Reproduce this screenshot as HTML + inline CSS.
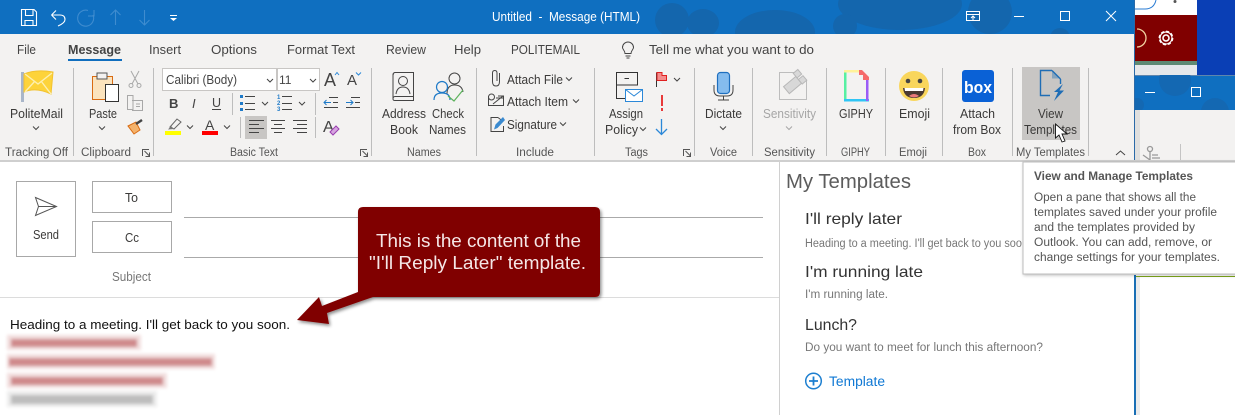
<!DOCTYPE html>
<html><head><meta charset="utf-8"><title>Untitled - Message (HTML)</title>
<style>
html,body{margin:0;padding:0;width:1235px;height:415px;overflow:hidden;background:#fff}
svg{display:block}
text{font-family:"Liberation Sans",sans-serif;font-size:12px;fill:#444}
.t{font-size:12.5px;fill:#444}
.b{font-size:12.5px;fill:#3b3a39}
.g{font-size:11.5px;fill:#555}
.tip{font-size:11.5px;fill:#555}
.ln{fill:none;stroke:#444;stroke-width:1}
.chev{fill:none;stroke:#444;stroke-width:1}
</style></head><body>
<svg width="1235" height="415" viewBox="0 0 1235 415" xmlns="http://www.w3.org/2000/svg">
<defs>
<filter id="bl" x="-10%" y="-10%" width="120%" height="120%"><feGaussianBlur stdDeviation="1.7"/></filter>
<filter id="sh" x="-10%" y="-10%" width="125%" height="130%"><feDropShadow dx="1.5" dy="2" stdDeviation="1.6" flood-color="#000" flood-opacity=".45"/></filter>
<filter id="sh2" x="-5%" y="-5%" width="110%" height="115%"><feDropShadow dx="1" dy="1" stdDeviation="1.5" flood-color="#000" flood-opacity=".25"/></filter>
<path id="c" d="M-3 -1.5 L0 1.5 L3 -1.5" class="chev"/>
<clipPath id="tb"><rect x="0" y="0" width="1134" height="34"/></clipPath>
<clipPath id="bd"><rect x="1135" y="75" width="100" height="35"/></clipPath>
</defs>

<!-- background windows at right -->
<rect x="1135" y="0" width="62" height="15" fill="#fff"/>
<path d="M1135 9 H1145 Q1154 9 1156 0" fill="none" stroke="#2b7cd3" stroke-width="1"/>
<circle cx="1175" cy="1.5" r="1.5" fill="#555"/>
<rect x="1135" y="15" width="62" height="46" fill="#800000"/>
<rect x="1135" y="61" width="62" height="4" fill="#5f8a74"/>
<rect x="1135" y="65" width="62" height="10" fill="#e6e8ea"/>
<rect x="1197" y="0" width="38" height="75" fill="#0a3fb5"/>
<path d="M1137 29 A9 9 0 0 1 1137 47" fill="none" stroke="#f0d0a0" stroke-width="1.3"/>
<g transform="translate(1166,38)" fill="none" stroke="#fff" stroke-width="2">
<circle r="3" stroke-width="1.6"/>
<circle r="6.4" stroke-dasharray="3 2"/>
<circle r="6" stroke-width="1.2"/>
</g>
<rect x="1135" y="75" width="100" height="35" fill="#0f6fc0"/>
<rect x="1135" y="75" width="100" height="1" fill="#5f86ad"/>
<g clip-path="url(#bd)" fill="#1468b2"><circle cx="1175" cy="80" r="16"/><circle cx="1215" cy="112" r="14"/><circle cx="1137" cy="105" r="7"/></g>
<rect x="1145" y="92" width="10" height="1" fill="#fff"/>
<rect x="1191.500" y="87.500" width="9" height="9" fill="none" stroke="#fff"/>
<rect x="1135" y="110" width="100" height="51" fill="#f3f2f1"/>
<rect x="1180" y="144" width="1" height="17" fill="#c4c4c4"/>
<g fill="none" stroke="#999" stroke-width="1.3"><circle cx="1150" cy="149" r="2.500"/><path d="M1150 152 V160 M1143 155 L1150 160 M1152 158 H1160 M1152 155 H1158"/></g>
<rect x="1135" y="161" width="100" height="254" fill="#fff"/>
<rect x="1135" y="276" width="100" height="1" fill="#7ca51a"/>
<rect x="1135" y="110" width="5" height="51" fill="#ccc" opacity=".5"/>
<rect x="1136" y="277" width="4" height="138" fill="#ddd" opacity=".6"/>

<!-- title bar -->
<rect x="0" y="0" width="1134" height="34" fill="#0f6fc0"/>
<g clip-path="url(#tb)" fill="#1466ad">
<circle cx="672" cy="20" r="17"/><ellipse cx="703" cy="23" rx="16" ry="14"/><ellipse cx="775" cy="32" rx="40" ry="22"/>
<ellipse cx="900" cy="4" rx="62" ry="26"/><circle cx="845" cy="26" r="12"/><circle cx="990" cy="12" r="22"/><circle cx="1060" cy="38" r="10"/>
</g>
<text x="492" y="21" textLength="148" lengthAdjust="spacingAndGlyphs" style="font-size:12.500px;fill:#fff">Untitled&#160; -&#160; Message (HTML)</text>
<!-- QAT -->
<g fill="none" stroke="#fff" stroke-width="1.100">
<path d="M21.500 9.500 H34 L36.500 12 V25.500 H21.500 Z M25.500 9.500 V15.500 H33 V9.500 M25 25.500 V20.500 H33 V25.500"/>
<path d="M52 15 H60 Q65 15 65 19.500 Q65 23 58 26 M51.500 15 L56 10.500 M51.500 15 L56 19.500"/>
</g>
<g fill="none" stroke="#3f8ccf" stroke-width="1.100">
<path d="M93 15 A8 8 0 1 1 88 10.500 M94 10 V16 H88"/>
<path d="M115.500 25 V10 M110.500 15 L115.500 10 L120.500 15"/>
<path d="M144.500 10 V25 M139.500 20 L144.500 25 L149.500 20"/>
</g>
<rect x="170" y="15" width="7" height="1" fill="#fff"/><path d="M170 18 H177 L173.500 21 Z" fill="#fff"/>
<!-- window ctrls -->
<g fill="none" stroke="#fff" stroke-width="1">
<path d="M966.500 11.500 H979.500 V20.500 H966.500 Z M966.500 14.500 H979.500 M973 20 V16 M971 18 L973 16 L975 18"/>
<path d="M1014 16.500 H1024"/>
<rect x="1060.500" y="11.500" width="9" height="9"/>
<path d="M1106 11 L1116 21 M1116 11 L1106 21"/>
</g>

<!-- ribbon -->
<rect x="0" y="34" width="1135" height="127" fill="#f3f2f1"/>
<rect x="1134" y="0" width="1" height="161" fill="#2a6aa8"/>
<rect x="0" y="160" width="1235" height="2" fill="#cfcfcf"/>
<text class="t" x="17" y="54" textLength="19" lengthAdjust="spacingAndGlyphs">File</text>
<text class="t" x="68" y="54" textLength="53" lengthAdjust="spacingAndGlyphs" style="font-weight:bold">Message</text>
<rect x="68" y="59" width="54" height="2" fill="#106ebe"/>
<text class="t" x="149" y="54" textLength="32" lengthAdjust="spacingAndGlyphs">Insert</text>
<text class="t" x="211" y="54" textLength="46" lengthAdjust="spacingAndGlyphs">Options</text>
<text class="t" x="287" y="54" textLength="68" lengthAdjust="spacingAndGlyphs">Format Text</text>
<text class="t" x="386" y="54" textLength="40" lengthAdjust="spacingAndGlyphs">Review</text>
<text class="t" x="454" y="54" textLength="27" lengthAdjust="spacingAndGlyphs">Help</text>
<text class="t" x="511" y="54" textLength="69" lengthAdjust="spacingAndGlyphs">POLITEMAIL</text>
<text class="t" x="649" y="54" textLength="165" lengthAdjust="spacingAndGlyphs">Tell me what you want to do</text>
<g fill="none" stroke="#444" transform="translate(0,1.500)"><path d="M625 52 C625 49 622.500 48 622.500 46 A5.500 5.500 0 0 1 633.500 46 C633.500 48 631 49 631 52 Z M625.500 54.500 H630.500 M626.500 56.500 H629.500"/></g>

<!-- separators -->
<g fill="#bdbdbd">
<rect x="73" y="68" width="1" height="88"/><rect x="153" y="68" width="1" height="88"/><rect x="371" y="68" width="1" height="88"/>
<rect x="476" y="68" width="1" height="88"/><rect x="594" y="68" width="1" height="88"/><rect x="694" y="68" width="1" height="88"/>
<rect x="752" y="68" width="1" height="88"/><rect x="826" y="68" width="1" height="88"/><rect x="885" y="68" width="1" height="88"/>
<rect x="942" y="68" width="1" height="88"/><rect x="1012" y="68" width="1" height="88"/><rect x="1088" y="68" width="1" height="88"/>
<rect x="232" y="93" width="1" height="22"/><rect x="315" y="93" width="1" height="22"/><rect x="240" y="117" width="1" height="21"/><rect x="315" y="117" width="1" height="21"/>
</g>

<!-- group labels -->
<text class="g" x="5" y="156" textLength="63" lengthAdjust="spacingAndGlyphs">Tracking Off</text>
<text class="g" x="81" y="156" textLength="50" lengthAdjust="spacingAndGlyphs">Clipboard</text>
<text class="g" x="230" y="156" textLength="48" lengthAdjust="spacingAndGlyphs">Basic Text</text>
<text class="g" x="407" y="156" textLength="34" lengthAdjust="spacingAndGlyphs">Names</text>
<text class="g" x="516" y="156" textLength="38" lengthAdjust="spacingAndGlyphs">Include</text>
<text class="g" x="625" y="156" textLength="23" lengthAdjust="spacingAndGlyphs">Tags</text>
<text class="g" x="710" y="156" textLength="27" lengthAdjust="spacingAndGlyphs">Voice</text>
<text class="g" x="764" y="156" textLength="51" lengthAdjust="spacingAndGlyphs">Sensitivity</text>
<text class="g" x="841" y="156" textLength="29" lengthAdjust="spacingAndGlyphs">GIPHY</text>
<text class="g" x="899" y="156" textLength="28" lengthAdjust="spacingAndGlyphs">Emoji</text>
<text class="g" x="968" y="156" textLength="18" lengthAdjust="spacingAndGlyphs">Box</text>
<text class="g" x="1016" y="156" textLength="69" lengthAdjust="spacingAndGlyphs">My Templates</text>
<!-- launchers -->
<g fill="none" stroke="#555"><path d="M142.500 156 V149.500 H149 M144.500 151 L149.500 156 M149.500 152.500 V156.500 H145.500"/>
<path d="M360.500 156 V149.500 H367 M362.500 151 L367.500 156 M367.500 152.500 V156.500 H363.500"/>
<path d="M683.500 156 V149.500 H690 M685.500 151 L690.500 156 M690.500 152.500 V156.500 H686.500"/></g>
<path d="M1116 155 L1120.500 151 L1125 155" fill="none" stroke="#444"/>

<!-- PoliteMail -->
<rect x="21" y="72" width="3" height="30" fill="#a9b6c9"/>
<path d="M24 74 Q36 69 53 72 L51 94 Q36 87 24 92 Z" fill="#fdd33a" stroke="#f2c230"/>
<path d="M25 74 L38 84 L52 73 M25 92 L35 81 M51 94 L41 81" fill="none" stroke="#fdf0b0" stroke-width="1.400"/>
<text class="b" x="10" y="118" textLength="53" lengthAdjust="spacingAndGlyphs">PoliteMail</text>
<use href="#c" x="36" y="128"/>

<!-- Clipboard -->
<rect x="92.500" y="76.500" width="20" height="23" fill="#fbe3bd" stroke="#d96b12"/>
<rect x="97" y="73" width="10" height="6" fill="#f3f2f1" stroke="#555"/>
<rect x="105.500" y="84.500" width="13" height="17" fill="#fff" stroke="#333"/>
<text class="b" x="89" y="118" textLength="28" lengthAdjust="spacingAndGlyphs">Paste</text>
<use href="#c" x="102" y="128"/>
<g fill="none" stroke="#a8a8a8" stroke-width="1"><path d="M131 71 L138 84 M139 71 L132 84"/><circle cx="131" cy="85.500" r="2"/><circle cx="139" cy="85.500" r="2"/>
<path d="M127.500 95.500 H133 V109.500 H127.500 Z M132 100.500 H142.500 V110.500 H132 M136 104 H140 M136 106.500 H140"/></g>
<path d="M128 126 L136 122 L140 130 L134 134 Z" fill="#f4b26b" stroke="#d96b12"/>
<path d="M136 124 L142 120" stroke="#444" stroke-width="2.500"/>

<!-- fonts -->
<rect x="162.500" y="68.500" width="114" height="22" fill="#fff" stroke="#c8c6c4"/>
<rect x="277.500" y="68.500" width="42" height="22" fill="#fff" stroke="#c8c6c4"/>
<text class="t" x="166" y="84" textLength="71" lengthAdjust="spacingAndGlyphs">Calibri (Body)</text>
<text x="279" y="84" style="font-size:12px;fill:#444">11</text>
<use href="#c" x="270" y="80.500"/><use href="#c" x="313" y="80.500"/>
<text x="324" y="86" style="font-size:18px;fill:#444" textLength="12" lengthAdjust="spacingAndGlyphs">A</text>
<path d="M335 75 L337 72.500 L339 75" fill="none" stroke="#2b88d8"/>
<text x="347" y="85" style="font-size:15px;fill:#444" textLength="10" lengthAdjust="spacingAndGlyphs">A</text>
<path d="M356 72.500 L358.500 75 L361 72.500" fill="none" stroke="#2b88d8"/>
<text x="169" y="108" style="font-size:13px;font-weight:bold;fill:#444">B</text>
<text x="192" y="108" style="font-size:13px;font-style:italic;fill:#444">I</text>
<text x="212" y="107" style="font-size:12.500px;fill:#444">U</text>
<rect x="212" y="109" width="9" height="1" fill="#444"/>
<!-- bullets -->
<g fill="#1e7ac8"><rect x="240" y="95" width="3" height="3"/><rect x="240" y="102" width="3" height="3"/><rect x="240" y="108" width="3" height="3"/></g>
<g fill="#444"><rect x="245" y="96" width="10" height="1"/><rect x="245" y="103" width="10" height="1"/><rect x="245" y="109" width="10" height="1"/>
<rect x="282" y="96" width="10" height="1"/><rect x="282" y="103" width="10" height="1"/><rect x="282" y="109" width="10" height="1"/></g>
<text x="277" y="99" style="font-size:6px;font-weight:bold;fill:#1e7ac8">1</text><text x="277" y="105" style="font-size:6px;font-weight:bold;fill:#1e7ac8">2</text><text x="277" y="111" style="font-size:6px;font-weight:bold;fill:#1e7ac8">3</text>
<use href="#c" x="265" y="103.500"/><use href="#c" x="302" y="103.500"/>
<g fill="#444"><rect x="329" y="97" width="9" height="1"/><rect x="333" y="102" width="5" height="1"/><rect x="324" y="107" width="14" height="1"/>
<rect x="351" y="97" width="9" height="1"/><rect x="355" y="102" width="5" height="1"/><rect x="346" y="107" width="14" height="1"/></g>
<path d="M324 102.500 H331 M326.500 100 L324 102.500 L326.500 105" fill="none" stroke="#1e7ac8"/>
<path d="M346 102.500 H353 M350.500 100 L353 102.500 L350.500 105" fill="none" stroke="#1e7ac8"/>
<!-- row 3 -->
<path d="M170 127 L177 119 L181 122 L174 129 Z" fill="none" stroke="#666"/>
<path d="M168 129.500 L171 126 L174 129 Z" fill="#777"/>
<rect x="165" y="131" width="16" height="4" fill="#ffff00"/>
<use href="#c" x="190" y="127"/>
<text x="205" y="130" style="font-size:14px;fill:#444">A</text>
<rect x="202" y="131" width="16" height="4" fill="#f00"/>
<use href="#c" x="227" y="127"/>
<rect x="245" y="116" width="22" height="23" fill="#c8c6c4"/>
<g fill="#444">
<rect x="249" y="120" width="15" height="1"/><rect x="249" y="124" width="10" height="1"/><rect x="249" y="128" width="15" height="1"/><rect x="249" y="132" width="10" height="1"/>
<rect x="271" y="120" width="14" height="1"/><rect x="274" y="124" width="8" height="1"/><rect x="271" y="128" width="14" height="1"/><rect x="274" y="132" width="8" height="1"/>
<rect x="293" y="120" width="14" height="1"/><rect x="297" y="124" width="10" height="1"/><rect x="293" y="128" width="14" height="1"/><rect x="297" y="132" width="10" height="1"/>
</g>
<text x="323" y="132" style="font-size:16px;fill:#444" textLength="11" lengthAdjust="spacingAndGlyphs">A</text>
<path d="M330 132 L336 126 L339 129 L333 135 Z" fill="#d6a5e0" stroke="#9a3fb0"/>

<!-- Names -->
<path d="M393.500 74 Q393.500 72.500 395 72.500 H413.500 V96.500 H395 Q393 96.500 393 99 V74 Z M393 99 Q393 100.500 395 100.500 H413.500 V96.500" fill="none" stroke="#444"/>
<circle cx="403" cy="81" r="4.500" fill="none" stroke="#444"/>
<path d="M396 94 Q397 87 403 87 Q409 87 410 94" fill="none" stroke="#444"/>
<text class="b" x="382" y="118" textLength="44" lengthAdjust="spacingAndGlyphs">Address</text>
<text class="b" x="390" y="134" textLength="28" lengthAdjust="spacingAndGlyphs">Book</text>
<circle cx="454.500" cy="78.500" r="5.500" fill="none" stroke="#444"/>
<path d="M447 94 Q447 85 454.500 85 Q462 85 463 92" fill="none" stroke="#444"/>
<circle cx="442" cy="87" r="5.500" fill="#f3f2f1" stroke="#1e7ac8" stroke-width="1.200"/>
<path d="M434 100 Q434 93 442 93 Q450 93 450 100" fill="none" stroke="#1e7ac8" stroke-width="1.200"/>
<path d="M448 96 L454 101 L463 90" fill="none" stroke="#5db35d" stroke-width="1.200"/>
<text class="b" x="432" y="118" textLength="32" lengthAdjust="spacingAndGlyphs">Check</text>
<text class="b" x="429" y="134" textLength="37" lengthAdjust="spacingAndGlyphs">Names</text>

<!-- Include -->
<path d="M499.500 73 V81.500 Q499.500 86 496 86 Q492.500 86 492.500 81.500 V73 Q492.500 70.500 494.800 70.500 Q497 70.500 497 73 V81" fill="none" stroke="#444"/>
<text class="b" x="507" y="84" textLength="56" lengthAdjust="spacingAndGlyphs">Attach File</text><use href="#c" x="569" y="79"/>
<path d="M494 105.500 H488.500 V96 M496 98 L503 98 M492 105.500 H503.500 V96 L498 96" fill="none" stroke="#444"/>
<circle cx="491.500" cy="97" r="3" fill="none" stroke="#444"/>
<path d="M493 104 L503 96" stroke="#444" fill="none"/>
<text class="b" x="507" y="106" textLength="61" lengthAdjust="spacingAndGlyphs">Attach Item</text><use href="#c" x="576" y="101"/>
<path d="M498 117.500 H491 V131.500 H503.500 V126 M498 117.500 L502.500 121" fill="none" stroke="#444"/>
<path d="M494 129.500 L495.500 124.500 L503 117 L505 120 L497.500 128 Z" fill="#3a8ad0"/>
<text class="b" x="507" y="129" textLength="50" lengthAdjust="spacingAndGlyphs">Signature</text><use href="#c" x="563" y="124"/>

<!-- Tags -->
<path d="M616.500 72.500 H637.500 V85 H616.500 Z M616.500 85 V98.500 H625" fill="none" stroke="#333"/>
<path d="M624.500 78.500 H629" stroke="#333" fill="none"/>
<rect x="625.500" y="89.500" width="17" height="12" fill="#fff" stroke="#2b88d8"/>
<path d="M625.500 89.500 L634 96 L642.500 89.500" fill="none" stroke="#2b88d8"/>
<text class="b" x="609" y="118" textLength="34" lengthAdjust="spacingAndGlyphs">Assign</text>
<text class="b" x="605" y="134" textLength="33" lengthAdjust="spacingAndGlyphs">Policy</text><use href="#c" x="643" y="129"/>
<path d="M656.500 87 V72.500" stroke="#333" fill="none"/>
<path d="M657 72.500 H662 V75.500 H666.500 V80.500 H657 Z" fill="#f48c8c" stroke="#e02020"/>
<use href="#c" x="677" y="79.500"/>
<rect x="661" y="95" width="2" height="11" fill="#e83a3a"/><rect x="661" y="108" width="2" height="3" fill="#e83a3a"/>
<path d="M661.500 119 V134 M656 129 L661.500 134.500 L667 129" fill="none" stroke="#2b88d8" stroke-width="1.300"/>

<!-- Dictate -->
<rect x="717.500" y="72.500" width="12" height="21" rx="3" fill="#85bcee" stroke="#1e6fbf" stroke-width="1.200"/>
<path d="M714 85 V90 Q714 96 720 96 H727 Q733 96 733 90 V85 M723.500 96 V100 M718 100 H729" fill="none" stroke="#444"/>
<text class="b" x="705" y="118" textLength="37" lengthAdjust="spacingAndGlyphs">Dictate</text>
<use href="#c" x="723" y="128"/>

<!-- Sensitivity -->
<path d="M800 72.500 H779.500 V99.500 H806.500 V80" fill="none" stroke="#bdbdbd"/>
<g transform="rotate(-40 793 84)" fill="#d8d8d8" stroke="#b8b8b8"><rect x="784" y="80" width="16" height="9" /><rect x="800" y="76" width="6" height="6"/><rect x="800" y="84" width="6" height="6"/></g>
<text class="b" x="763" y="118" textLength="53" lengthAdjust="spacingAndGlyphs" style="fill:#a6a6a6">Sensitivity</text>
<path d="M786 126.500 L789 129.500 L792 126.500" fill="none" stroke="#a6a6a6"/>

<!-- GIPHY -->
<rect x="844" y="71" width="2.500" height="30" fill="#57f0a2"/><rect x="844" y="99" width="25" height="2.500" fill="#2fc5f5"/>
<rect x="866" y="80" width="2.500" height="21" fill="#9b5cf6"/><rect x="844" y="70" width="15" height="2.500" fill="#fff29a"/>
<path d="M859 70 H862 L869 77 V80 H863 V75 H859 Z" fill="#f56a6a"/>
<text class="b" x="839" y="118" textLength="34" lengthAdjust="spacingAndGlyphs">GIPHY</text>

<!-- Emoji -->
<circle cx="914" cy="86" r="15" fill="#f9d65c"/>
<circle cx="908" cy="81" r="2.300" fill="#444"/><circle cx="920" cy="81" r="2.300" fill="#444"/>
<path d="M903 88 H925 Q924 98 914 98 Q904 98 903 88 Z" fill="#4a3a32"/>
<path d="M904.500 88 H923.500 L923 91 H905 Z" fill="#fff"/>
<path d="M909 96 Q914 92 919 96 Q914 99 909 96 Z" fill="#ea7a7a"/>
<text class="b" x="899" y="118" textLength="31" lengthAdjust="spacingAndGlyphs">Emoji</text>

<!-- Box -->
<rect x="962" y="70" width="32" height="32" rx="3" fill="#0a61d6"/>
<text x="964" y="93" textLength="28" lengthAdjust="spacingAndGlyphs" style="font-size:17px;font-weight:bold;fill:#fff">box</text>
<text class="b" x="960" y="118" textLength="35" lengthAdjust="spacingAndGlyphs">Attach</text>
<text class="b" x="953" y="134" textLength="48" lengthAdjust="spacingAndGlyphs">from Box</text>

<!-- View templates -->
<rect x="1022" y="67" width="58" height="73" fill="#c8c6c4"/>
<path d="M1052 70.500 H1040.500 V95.500 H1050 M1052 70.500 L1060.500 79 M1060.500 79 V84" fill="none" stroke="#1f6db5" stroke-width="1.400"/>
<path d="M1052 71 V78.500 H1060 Z" fill="#1f6db5" opacity=".4"/>
<path d="M1063 84 L1054 92 H1058 L1054 101 L1064 90.500 H1059.500 Z" fill="#1f6db5"/>
<text class="b" x="1038" y="118" textLength="25" lengthAdjust="spacingAndGlyphs">View</text>
<text class="b" x="1024" y="134" textLength="53" lengthAdjust="spacingAndGlyphs">Templates</text>
<path d="M1055.500 124 V138 L1059 135 L1062 142 L1065 141 L1062 134 L1067 134 Z" fill="#fff" stroke="#111" stroke-width=".9"/>

<!-- compose area -->
<rect x="16.500" y="181.500" width="59" height="75" fill="#fff" stroke="#a8a8a8"/>
<path d="M35.500 197.500 L56.500 206.500 L35.500 215.500 L38.500 206.500 Z M38.500 206.500 H56.500" fill="none" stroke="#555"/>
<text class="b" x="33" y="239" textLength="26" lengthAdjust="spacingAndGlyphs">Send</text>
<rect x="92.500" y="181.500" width="79" height="31" fill="#fff" stroke="#a8a8a8"/>
<rect x="92.500" y="221.500" width="79" height="31" fill="#fff" stroke="#a8a8a8"/>
<text class="b" x="125" y="202" textLength="13" lengthAdjust="spacingAndGlyphs">To</text>
<text class="b" x="125" y="242" textLength="14" lengthAdjust="spacingAndGlyphs">Cc</text>
<rect x="184" y="217" width="579" height="1" fill="#aaa"/>
<rect x="184" y="257" width="579" height="1" fill="#aaa"/>
<text class="b" x="112" y="281" textLength="39" lengthAdjust="spacingAndGlyphs" style="fill:#777">Subject</text>
<rect x="0" y="297" width="779" height="1" fill="#dcdcdc"/>
<text x="10" y="329" textLength="280" lengthAdjust="spacingAndGlyphs" style="font-size:13px;fill:#111">Heading to a meeting. I'll get back to you soon.</text>

<!-- blurred signature -->
<g filter="url(#bl)">
<rect x="7" y="335" width="134" height="15" fill="#f2dede"/>
<rect x="7" y="354" width="208" height="15" fill="#f2dede"/>
<rect x="7" y="373" width="160" height="15" fill="#f2dede"/>
<rect x="7" y="391" width="150" height="16" fill="#ececec"/>
<rect x="11" y="339" width="126" height="8" fill="#cf8a8c"/>
<rect x="9" y="358" width="203" height="8" fill="#cf8a8c"/>
<rect x="11" y="377" width="152" height="8" fill="#cf8a8c"/>
<rect x="11" y="395" width="142" height="9" fill="#bdbdbd"/>
</g>

<!-- pane -->
<rect x="779" y="161" width="1" height="254" fill="#d0d0d0"/>
<text x="786" y="188" textLength="125" lengthAdjust="spacingAndGlyphs" style="font-size:20px;fill:#5c5c5c">My Templates</text>
<text x="805" y="224" textLength="97" lengthAdjust="spacingAndGlyphs" style="font-size:16px;fill:#333">I'll reply later</text>
<text x="805" y="247" textLength="226" lengthAdjust="spacingAndGlyphs" style="font-size:11.500px;fill:#777">Heading to a meeting. I'll get back to you soon.</text>
<text x="805" y="277" textLength="118" lengthAdjust="spacingAndGlyphs" style="font-size:16px;fill:#333">I'm running late</text>
<text x="805" y="298" textLength="83" lengthAdjust="spacingAndGlyphs" style="font-size:11.500px;fill:#777">I'm running late.</text>
<text x="805" y="330" textLength="52" lengthAdjust="spacingAndGlyphs" style="font-size:16px;fill:#333">Lunch?</text>
<text x="805" y="351" textLength="238" lengthAdjust="spacingAndGlyphs" style="font-size:11.500px;fill:#777">Do you want to meet for lunch this afternoon?</text>
<circle cx="813.500" cy="381" r="7.800" fill="none" stroke="#1d7fd0" stroke-width="1.500"/>
<path d="M809 381 H818 M813.500 376.500 V385.500" stroke="#1d7fd0" stroke-width="1.800" fill="none"/>
<text x="829" y="386" textLength="56" lengthAdjust="spacingAndGlyphs" style="font-size:13.500px;fill:#0f78d4">Template</text>

<rect x="1134" y="275" width="2" height="140" fill="#1a6fb5"/>

<!-- tooltip -->
<rect x="1023" y="162" width="230" height="112" fill="#fff" stroke="#bdbdbd" filter="url(#sh2)"/>
<text x="1034" y="180" textLength="159" lengthAdjust="spacingAndGlyphs" style="font-size:12px;font-weight:bold;fill:#555">View and Manage Templates</text>
<text class="tip" x="1034" y="201" textLength="162" lengthAdjust="spacingAndGlyphs">Open a pane that shows all the</text>
<text class="tip" x="1034" y="216" textLength="183" lengthAdjust="spacingAndGlyphs">templates saved under your profile</text>
<text class="tip" x="1034" y="231" textLength="161" lengthAdjust="spacingAndGlyphs">and the templates provided by</text>
<text class="tip" x="1034" y="246" textLength="178" lengthAdjust="spacingAndGlyphs">Outlook. You can add, remove, or</text>
<text class="tip" x="1034" y="261" textLength="186" lengthAdjust="spacingAndGlyphs">change settings for your templates.</text>

<!-- callout -->
<g filter="url(#sh)">
<path d="M363 207 H595 Q600 207 600 212 V292 Q600 297 595 297 H373 L327 313 L329 324 L297 320 L319 297 L322 306 L358 292 V212 Q358 207 363 207 Z" fill="#800000"/>
</g>
<text x="376" y="247" textLength="205" lengthAdjust="spacingAndGlyphs" style="font-size:18px;fill:#f5e6e6">This is the content of the</text>
<text x="369" y="269" textLength="217" lengthAdjust="spacingAndGlyphs" style="font-size:18px;fill:#f5e6e6">"I'll Reply Later" template.</text>
</svg>
</body></html>
